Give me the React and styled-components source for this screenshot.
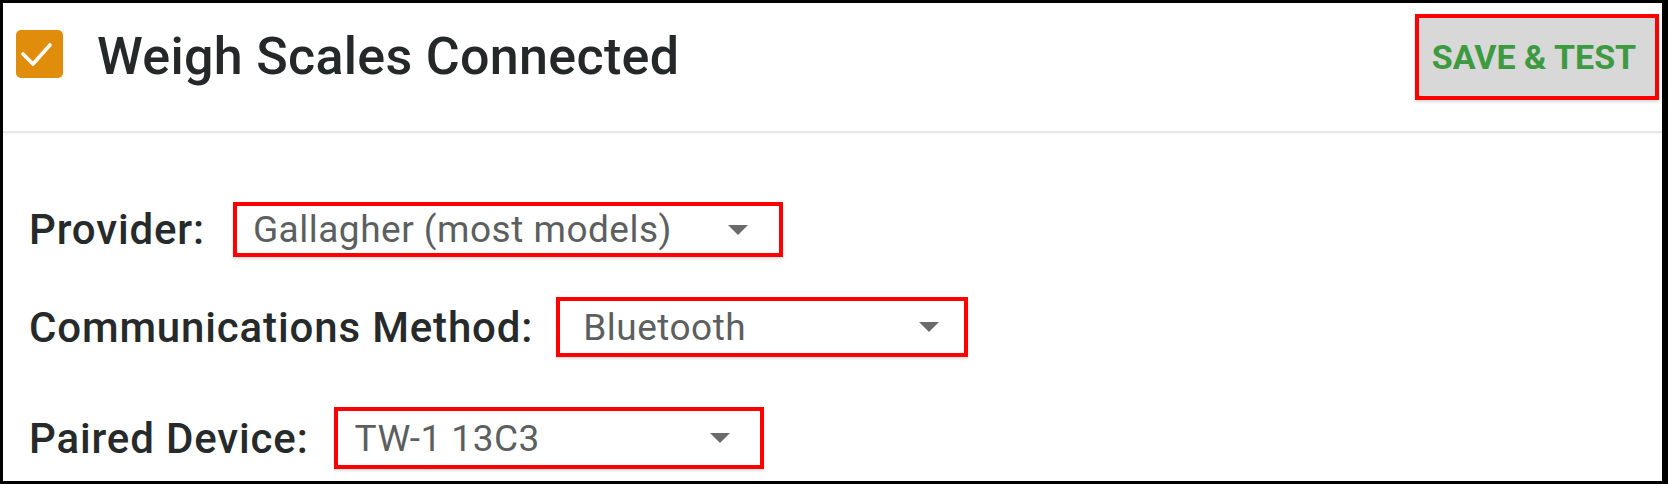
import React from "react";
import styled, { createGlobalStyle } from "styled-components";

const GlobalStyle = createGlobalStyle`
  html, body {
    margin: 0;
    padding: 0;
    background: #fff;
  }
  * {
    box-sizing: border-box;
  }
`;

const rows = [
  { label: "Provider:", value: "Gallagher (most models)", gap: 28, top: 69, width: 550, height: 55, pad: 16, arrow: 31 },
  { label: "Communications Method:", value: "Bluetooth", gap: 23, top: 40, width: 412, height: 60, pad: 23, arrow: 25 },
  { label: "Paired Device:", value: "TW-1 13C3", gap: 25, top: 50, width: 430, height: 62, pad: 17, arrow: 30 },
];

const App = () => (
  <>
    <GlobalStyle />
    <Frame>
      <Header>
        <CheckBox>
          <svg width="47" height="47" viewBox="0 0 47 47">
            <polyline
              points="7,24 17,34 34,15"
              fill="none"
              stroke="#fff"
              strokeWidth="3.6"
              strokeLinecap="round"
              strokeLinejoin="round"
            />
          </svg>
        </CheckBox>
        <Title>Weigh Scales Connected</Title>
        <SaveButton type="button">SAVE &amp; TEST</SaveButton>
      </Header>
      <Body>
        {rows.map((row) => (
          <Row key={row.label} $top={row.top}>
            <Label>{row.label}</Label>
            <Dropdown $gap={row.gap} $width={row.width} $height={row.height} $pad={row.pad}>
              <Value>{row.value}</Value>
              <Arrow $right={row.arrow} />
            </Dropdown>
          </Row>
        ))}
      </Body>
    </Frame>
  </>
);

const Frame = styled.div`
  width: 1668px;
  height: 484px;
  border-style: solid;
  border-color: #000;
  border-width: 3px 6px 3px 3px;
  background: #fff;
  font-family: Roboto, "Liberation Sans", sans-serif;
  overflow: hidden;
`;

const Header = styled.div`
  display: flex;
  align-items: center;
  height: 130px;
  padding: 0 3px 20px 13px;
  border-bottom: 2px solid #e6e6e6;
  box-shadow: 0 1px 2px rgba(0, 0, 0, 0.04);
`;

const CheckBox = styled.div`
  width: 47px;
  height: 48px;
  margin-bottom: 7px;
  border-radius: 5px;
  background: #e08d0c;
  display: flex;
  align-items: center;
  justify-content: center;
  flex-shrink: 0;
`;

const Title = styled.h1`
  margin: 0 0 0 34px;
  font-size: 52px;
  font-weight: 500;
  letter-spacing: 0.3px;
  line-height: 1;
  color: #242828;
`;

const SaveButton = styled.button`
  margin-left: auto;
  width: 244px;
  height: 86px;
  border: 4px solid #ff0000;
  background: #d7d8d7;
  color: #3d9a40;
  font-family: Roboto, "Liberation Sans", sans-serif;
  font-size: 34px;
  font-weight: 700;
  padding: 0 6px 0 0;
  box-shadow: 0 2px 3px rgba(0, 0, 0, 0.15);
  cursor: pointer;
`;

const Body = styled.div`
  padding-left: 26px;
`;

const Row = styled.div`
  display: flex;
  align-items: center;
  margin-top: ${(p) => p.$top}px;
`;

const Label = styled.span`
  font-size: 42px;
  font-weight: 500;
  letter-spacing: 0.85px;
  color: #262a2a;
  white-space: nowrap;
`;

const Dropdown = styled.div`
  display: flex;
  align-items: center;
  margin-left: ${(p) => p.$gap}px;
  width: ${(p) => p.$width}px;
  height: ${(p) => p.$height}px;
  padding-left: ${(p) => p.$pad}px;
  border: 4px solid #ff0000;
  box-shadow: 0 2px 2px rgba(0, 0, 0, 0.12);
`;

const Value = styled.span`
  font-size: 37px;
  font-weight: 400;
  letter-spacing: 0.5px;
  color: #5c5f5f;
  white-space: nowrap;
`;

const Arrow = styled.span`
  margin-left: auto;
  margin-right: ${(p) => p.$right}px;
  width: 0;
  height: 0;
  border-left: 10px solid transparent;
  border-right: 10px solid transparent;
  border-top: 10px solid #6b6b6b;
`;

export default App;
